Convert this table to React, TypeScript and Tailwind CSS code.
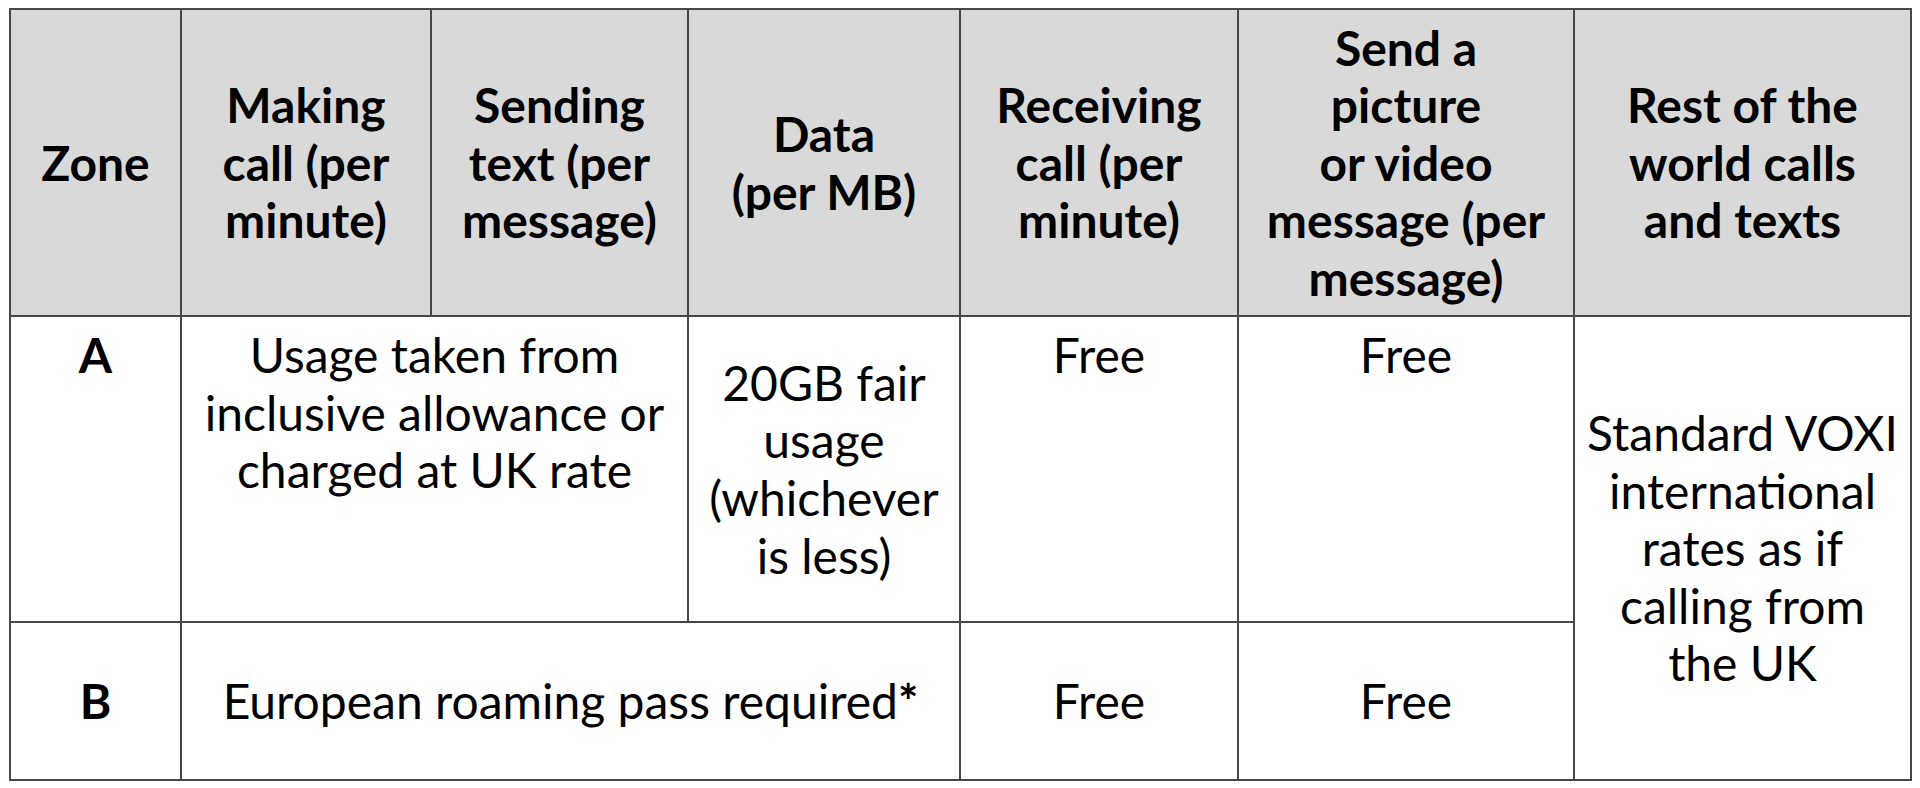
import React from 'react';

const head = [
  ['Zone'],
  ['Making', 'call (per', 'minute)'],
  ['Sending', 'text (per', 'message)'],
  ['Data', '(per MB)'],
  ['Receiving', 'call (per', 'minute)'],
  ['Send a', 'picture', 'or video', 'message (per', 'message)'],
  ['Rest of the', 'world calls', 'and texts'],
];

const Lines: React.FC<{ lines: string[] }> = ({ lines }) => (
  <>
    {lines.map((l, i) => (
      <span key={i} className="block whitespace-nowrap">
        {l}
      </span>
    ))}
  </>
);

const cell = 'border-2 border-[#474747] text-center px-1';

export default function App() {
  return (
    <div className="bg-white min-h-screen pt-[8px] pl-[9px] text-black font-['Lato',sans-serif] text-[48px] leading-[1.2]">
      <table className="table-fixed border-collapse w-[1901px]">
        <colgroup>
          <col className="w-[171px]" />
          <col className="w-[250px]" />
          <col className="w-[257px]" />
          <col className="w-[272px]" />
          <col className="w-[278px]" />
          <col className="w-[336px]" />
          <col className="w-[337px]" />
        </colgroup>
        <thead>
          <tr className="h-[307px] bg-[#d9d9d9]">
            {head.map((h, i) => (
              <th key={i} className={`${cell} font-bold align-middle`}>
                <Lines lines={h} />
              </th>
            ))}
          </tr>
        </thead>
        <tbody>
          <tr className="h-[306px]">
            <td className={`${cell} font-bold align-top pt-[9px]`}>A</td>
            <td colSpan={2} className={`${cell} align-top pt-[9px]`}>
              <Lines lines={['Usage taken from', 'inclusive allowance or', 'charged at UK rate']} />
            </td>
            <td className={`${cell} align-middle`}>
              <Lines lines={['20GB fair', 'usage', '(whichever', 'is less)']} />
            </td>
            <td className={`${cell} align-top pt-[9px]`}>Free</td>
            <td className={`${cell} align-top pt-[9px]`}>Free</td>
            <td rowSpan={2} className={`${cell} align-middle`}>
              <Lines lines={['Standard VOXI', 'international', 'rates as if', 'calling from', 'the UK']} />
            </td>
          </tr>
          <tr className="h-[158px]">
            <td className={`${cell} font-bold align-middle`}>B</td>
            <td colSpan={3} className={`${cell} align-middle`}>
              European roaming pass required<span className="font-bold">*</span>
            </td>
            <td className={`${cell} align-middle`}>Free</td>
            <td className={`${cell} align-middle`}>Free</td>
          </tr>
        </tbody>
      </table>
    </div>
  );
}
